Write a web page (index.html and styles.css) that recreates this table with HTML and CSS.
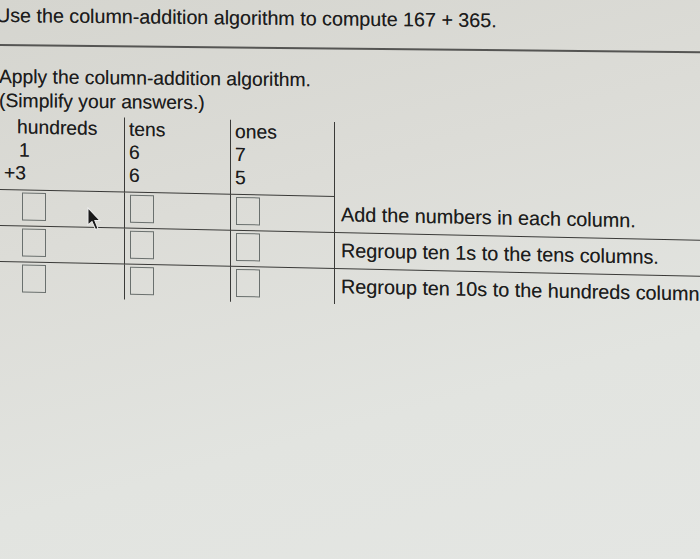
FILE: index.html
```html
<!DOCTYPE html>
<html>
<head>
<meta charset="utf-8">
<link rel="stylesheet" href="styles.css">
</head>
<body>
<div class="page">
  <div class="title">Use the column-addition algorithm to compute 167 + 365.</div>
  <div class="rule"></div>
  <div class="intro">
    <div>Apply the column-addition algorithm.</div>
    <div>(Simplify your answers.)</div>
  </div>
  <div class="grid">
    <div class="head col-h"><div class="hl pad-hund">hundreds</div><div class="hl pad-one">1</div><div class="hl pad-plus">+3</div></div>
    <div class="head col-t"><div class="hl">tens</div><div class="hl">6</div><div class="hl">6</div></div>
    <div class="head col-o"><div class="hl">ones</div><div class="hl">7</div><div class="hl">5</div></div>
    <div class="head-empty"></div>

    <div class="cell col-h sep"><span class="box"></span></div>
    <div class="cell col-t sep"><span class="box"></span></div>
    <div class="cell col-o sep"><span class="box"></span></div>
    <div class="instr sep">Add the numbers in each column.</div>

    <div class="cell col-h sep"><span class="box"></span></div>
    <div class="cell col-t sep"><span class="box"></span></div>
    <div class="cell col-o sep"><span class="box"></span></div>
    <div class="instr sep">Regroup ten 1s to the tens columns.</div>

    <div class="cell col-h"><span class="box"></span></div>
    <div class="cell col-t"><span class="box"></span></div>
    <div class="cell col-o"><span class="box"></span></div>
    <div class="instr">Regroup ten 10s to the hundreds column</div>
  </div>
  <svg class="cursor" width="16" height="26" viewBox="0 0 16 26"><path d="M1 1 L1 18 L5 14.5 L8.5 22.5 L11 21.5 L7.8 13.5 L13 13.5 Z" fill="#1a1a1a" stroke="#ececec" stroke-width="1"/></svg>
</div>
</body>
</html>
```
FILE: styles.css
```css
html, body {
  margin: 0;
  padding: 0;
}
body {
  width: 700px;
  height: 559px;
  overflow: hidden;
  background: linear-gradient(165deg, #d5d5cf 0%, #dcdcd7 35%, #e2e4e0 70%, #e4e6e3 100%);
  font-family: "Liberation Sans", Arial, sans-serif;
  color: #1c1c1c;
  text-shadow: 0 0 0.5px rgba(0, 0, 0, 0.45);
}
.page {
  position: relative;
  height: 559px;
  transform: skewY(0.6deg);
  transform-origin: 0 0;
}
.title {
  font-size: 19.7px;
  line-height: 24px;
  padding-top: 3px;
  margin-left: -4px;
  white-space: nowrap;
}
.rule {
  margin-top: 17px;
  height: 2px;
  background: #555553;
}
.intro {
  margin-top: 19px;
  margin-left: -1px;
  font-size: 19.3px;
  line-height: 24px;
}
.grid {
  margin-top: 2px;
  display: grid;
  grid-template-columns: 125px 106px 104px 1fr;
  grid-template-rows: 75px 36px 36px 35px;
  font-size: 19.3px;
  transform: skewY(0.6deg);
  transform-origin: 0 0;
}
.head {
  border-bottom: 1.5px solid #3a3a38;
}
.col-h, .col-t, .col-o {
  border-right: 1.5px solid #3a3a38;
}
.col-t .hl, .col-o .hl {
  padding-left: 4px;
}
.hl {
  line-height: 23px;
  white-space: nowrap;
}
.pad-hund { padding-left: 17px; }
.pad-one { padding-left: 19px; }
.pad-plus { padding-left: 4px; }
.sep {
  border-bottom: 1.5px solid #3a3a38;
}
.cell {
  display: flex;
  align-items: flex-start;
  padding-top: 2px;
}
.col-h.cell { padding-left: 22px; }
.col-t.cell { padding-left: 5px; }
.col-o.cell { padding-left: 5px; }
.box {
  display: block;
  width: 22px;
  height: 26px;
  border: 1.5px solid #6a706e;
}
.instr {
  padding-left: 6px;
  padding-top: 1px;
  font-size: 19.8px;
  line-height: 32px;
  white-space: nowrap;
  overflow: hidden;
}
.cursor {
  position: absolute;
  left: 87px;
  top: 206px;
}
```
